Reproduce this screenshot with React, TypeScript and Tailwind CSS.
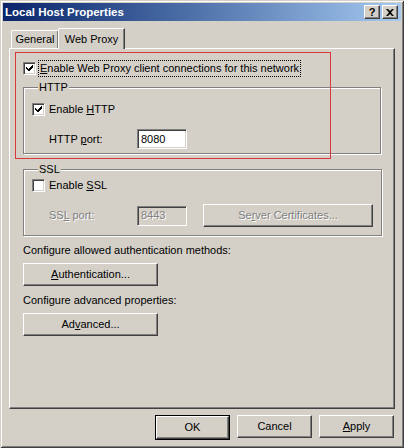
import type { ReactNode } from 'react';

const raised =
  'border border-t-white border-l-white border-b-[#404040] border-r-[#404040] shadow-[inset_-1px_-1px_0_#808080]';
const sunken =
  'border border-t-[#808080] border-l-[#808080] border-b-white border-r-white shadow-[inset_1px_1px_0_#404040,inset_-1px_-1px_0_#d4d0c8]';

function Check({ checked }: { checked: boolean }) {
  return (
    <span className={`w-[13px] h-[13px] shrink-0 bg-white ${sunken} flex items-center justify-center`}>
      {checked && (
        <svg width="7" height="7" viewBox="0 0 7 7">
          <path d="M0 2h1v1h1v1h1V3h1V2h1V1h1V0h1v3h-1v1h-1v1h-1v1h-1v1H3V6H2V5H1V4H0z" fill="#000" />
        </svg>
      )}
    </span>
  );
}

function Btn({ children, className = '', disabled = false }: { children: ReactNode; className?: string; disabled?: boolean }) {
  return (
    <div
      className={`h-[23px] flex items-center justify-center bg-[#d4d0c8] ${raised} ${
        disabled ? 'text-[#808080] [text-shadow:1px_1px_0_#fff]' : 'text-black'
      } ${className}`}
    >
      {children}
    </div>
  );
}

function Group({ title, children, className = '' }: { title: string; children: ReactNode; className?: string }) {
  return (
    <fieldset
      className={`border border-[#808080] shadow-[1px_1px_0_#fff,inset_1px_1px_0_#fff] px-[8px] ${className}`}
    >
      <legend className="ml-[6px] px-[1px] leading-[13px] bg-[#d4d0c8]">{title}</legend>
      {children}
    </fieldset>
  );
}

export default function App() {
  return (
    <div
      className="relative w-[404px] h-[448px] bg-[#d4d0c8] p-[3px] flex flex-col text-[11px] leading-[13px] text-black shadow-[inset_1px_1px_0_#d4d0c8,inset_-1px_-1px_0_#404040,inset_2px_2px_0_#fff,inset_-2px_-2px_0_#808080]"
      style={{ fontFamily: '"Liberation Sans", Arial, sans-serif' }}
    >
      {/* Title bar */}
      <div className="h-[18px] flex items-center justify-between pl-[2px] pr-[3px] bg-gradient-to-r from-[#0a246a] to-[#a6caf0]">
        <span className="text-white font-bold text-[11.5px]">Local Host Properties</span>
        <div className="flex">
          <div className={`w-[16px] h-[14px] bg-[#d4d0c8] ${raised} flex items-center justify-center font-bold text-[11px] leading-none`}>
            ?
          </div>
          <div className={`w-[16px] h-[14px] ml-[2px] bg-[#d4d0c8] ${raised} flex items-center justify-center`}>
            <svg width="8" height="7" viewBox="0 0 8 7">
              <path d="M0 0h2l2 2 2-2h2L5 3.5 8 7H6L4 5 2 7H0l3-3.5z" fill="#000" />
            </svg>
          </div>
        </div>
      </div>

      {/* Tabs + panel */}
      <div className="px-[6px] pt-[7px] flex flex-col">
        <div className="flex items-end h-[20px] pl-[2px]">
          <div className="w-[48px] h-[18px] border-t border-l border-white border-r border-r-[#404040] shadow-[inset_-1px_0_0_#808080] rounded-tl-[2px] flex items-center justify-center">
            General
          </div>
          <div className="relative z-10 -mb-px w-[67px] h-[21px] -ml-[1px] bg-[#d4d0c8] border-t border-l border-white border-r border-r-[#404040] shadow-[inset_-1px_0_0_#808080] rounded-tl-[2px] flex items-start justify-center pt-[4px]">
            Web Proxy
          </div>
        </div>

        <div className="h-[361px] border border-t-white border-l-white border-r-[#404040] border-b-[#404040] shadow-[inset_-1px_-1px_0_#808080] px-[13px] pt-[11px] flex flex-col">
          <div className="flex items-center h-[17px]">
            <Check checked />
            <span className="ml-[2px] px-[1px] h-[17px] flex items-center border border-dotted border-black">
              <span><u>E</u>nable Web Proxy client connections for this network</span>
            </span>
          </div>

          <Group title="HTTP" className="mt-[4px] pt-[7px] pb-[4px]">
            <div className="flex items-center h-[17px]">
              <Check checked />
              <span className="ml-[4px]">
                Enable <u>H</u>TTP
              </span>
            </div>
            <div className="flex items-center mt-[11px]">
              <span className="w-[105px] pl-[17px]">
                HTTP <u>p</u>ort:
              </span>
              <div className={`w-[50px] h-[20px] bg-white ${sunken} flex items-center pl-[3px]`}>8080</div>
            </div>
          </Group>

          <Group title="SSL" className="mt-[9px] pt-[1px] pb-[8px]">
            <div className="flex items-center h-[17px]">
              <Check checked={false} />
              <span className="ml-[4px]">
                Enable <u>S</u>SL
              </span>
            </div>
            <div className="flex items-center mt-[10px] text-[#808080] [text-shadow:1px_1px_0_#fff]">
              <span className="w-[105px] pl-[17px]">
                SS<u>L</u> port:
              </span>
              <div className={`w-[50px] h-[20px] bg-[#d4d0c8] ${sunken} flex items-center pl-[3px]`}>8443</div>
              <Btn disabled className="ml-[16px] w-[170px]">
                <span>
                  Se<u>r</u>ver Certificates...
                </span>
              </Btn>
            </div>
          </Group>

          <p className="mt-[8px]">Configure allowed authentication methods:</p>
          <Btn className="mt-[6px] w-[135px]">
            <span>
              <u>A</u>uthentication...
            </span>
          </Btn>
          <p className="mt-[8px]">Configure advanced properties:</p>
          <Btn className="mt-[6px] w-[135px]">
            <span>
              Ad<u>v</u>anced...
            </span>
          </Btn>
        </div>

        {/* Dialog buttons */}
        <div className="flex justify-end gap-[7px] mt-[6px] pr-[1px]">
          <div className="border border-black">
            <Btn className="w-[73px] h-[21px]">OK</Btn>
          </div>
          <Btn className="w-[75px]">Cancel</Btn>
          <Btn className="w-[75px]">
            <span>
              <u>A</u>pply
            </span>
          </Btn>
        </div>
      </div>

      {/* Red annotation */}
      <div className="absolute left-[15px] top-[52px] w-[316px] h-[107px] border border-[#d9383a] pointer-events-none" />
    </div>
  );
}
